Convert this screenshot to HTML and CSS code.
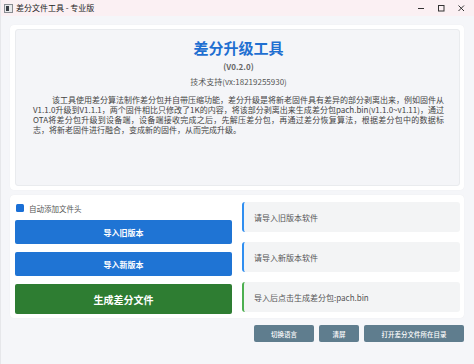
FILE: index.html
```html
<!DOCTYPE html>
<html lang="zh-CN">
<head>
<meta charset="utf-8">
<title>差分文件工具 - 专业版</title>
<link rel="stylesheet" href="styles.css">
</head>
<body>
<div class="window">
  <div class="titlebar">
    <div class="tb-left">
      <svg class="app-icon" width="9" height="9" viewBox="0 0 9 9"><rect x="0.5" y="0.5" width="8" height="8" fill="#e9eaec" stroke="#8a8d92"/><rect x="2" y="2" width="3" height="5" fill="#3b3f45"/></svg>
      <span class="tb-title">差分文件工具 - 专业版</span>
    </div>
    <div class="tb-controls">
      <svg width="10" height="10" viewBox="0 0 10 10"><line x1="2" y1="5.5" x2="8" y2="5.5" stroke="#333" stroke-width="1"/></svg>
      <svg width="10" height="10" viewBox="0 0 10 10"><rect x="2.5" y="2.5" width="5.5" height="5.5" fill="none" stroke="#333" stroke-width="1"/></svg>
      <svg width="10" height="10" viewBox="0 0 10 10"><path d="M2.5 2.5 L8 8 M8 2.5 L2.5 8" stroke="#333" stroke-width="1"/></svg>
    </div>
  </div>
  <div class="main">
    <section class="card intro-card">
      <div class="intro">
        <h1 class="app-title">差分升级工具</h1>
        <div class="version">(V0.2.0)</div>
        <div class="support">技术支持(vx:18219255930)</div>
        <p class="desc">该工具使用差分算法制作差分包并自带压缩功能，差分升级是将新老固件具有差异的部分剥离出来，例如固件从V1.1.0升级到V1.1.1，两个固件相比只修改了1K的内容，将该部分剥离出来生成差分包pach.bin(v1.1.0~v1.11)，通过OTA将差分包升级到设备端，设备端接收完成之后，先解压差分包，再通过差分恢复算法，根据差分包中的数据标志，将新老固件进行融合，变成新的固件，从而完成升级。</p>
      </div>
    </section>
    <section class="card work-card">
      <div class="col-left">
        <label class="check-row"><span class="checkbox"></span><span class="check-label">自动添加文件头</span></label>
        <button class="btn btn-blue">导入旧版本</button>
        <button class="btn btn-blue">导入新版本</button>
        <button class="btn btn-green">生成差分文件</button>
      </div>
      <div class="col-right">
        <div class="info info-blue">请导入旧版本软件</div>
        <div class="info info-blue">请导入新版本软件</div>
        <div class="info info-green">导入后点击生成差分包:pach.bin</div>
      </div>
    </section>
    <div class="actions">
      <button class="act act-lang">切换语言</button>
      <button class="act act-clear">清屏</button>
      <button class="act act-open">打开差分文件所在目录</button>
    </div>
  </div>
</div>
</body>
</html>
```
FILE: styles.css
```css
* { box-sizing: border-box; margin: 0; padding: 0; }
html, body { width: 474px; height: 364px; overflow: hidden; }
body {
  font-family: "Noto Sans CJK SC", "Open Sans", sans-serif;
  background: #f5f6f9;
  color: #333;
}
.window {
  width: 474px;
  height: 364px;
  display: flex;
  flex-direction: column;
  border-left: 1px solid #e6e7ea;
  background: #f5f6f9;
}
.titlebar {
  height: 16px;
  background: #fbf0f3;
  display: flex;
  align-items: center;
  justify-content: space-between;
  padding: 0 8px 0 3px;
}
.tb-left { display: flex; align-items: center; gap: 3px; }
.app-icon { display: block; }
.tb-title { font-size: 8px; color: #222; line-height: 16px; }
.tb-controls { display: flex; align-items: center; gap: 10px; }
.tb-controls svg { display: block; }
.main {
  flex: 1;
  display: flex;
  flex-direction: column;
  padding: 9px 10px 0 9px;
}
.card {
  background: #fff;
  border-radius: 4px;
  box-shadow: 0 0 1px rgba(0,0,0,0.08);
}
.intro-card { padding: 4px 4px 4px 5px; height: 165px; }
.intro {
  height: 100%;
  background: #f4f5f8;
  border: 1px solid #e9ebee;
  border-radius: 3px;
  padding: 8px 15px 0 17px;
  text-align: center;
}
.app-title {
  font-size: 15px;
  font-weight: 700;
  color: #1f6fd1;
  line-height: 20px;
}
.version {
  font-size: 8px;
  font-weight: 600;
  color: #666;
  line-height: 12px;
  margin-top: 3px;
}
.support {
  font-size: 8px;
  color: #555;
  line-height: 12px;
  margin-top: 3px;
}
.desc {
  margin-top: 7px;
  font-size: 8px;
  line-height: 10px;
  color: #444;
  text-align: justify;
  text-indent: 19px;
}
.work-card {
  margin-top: 5px;
  height: 123px;
  display: flex;
  gap: 10px;
  padding: 7px 4px 4px 5px;
}
.col-left { width: 217px; display: flex; flex-direction: column; }
.check-row { display: flex; align-items: center; gap: 5px; height: 12px; margin-left: 1px; }
.checkbox {
  width: 8px; height: 8px;
  background: #1a6fd6;
  border-radius: 1.5px;
  display: block;
}
.check-label { font-size: 7.5px; color: #555; }
.btn {
  border: none;
  border-radius: 2px;
  color: #fff;
  font-family: "Noto Sans CJK SC", sans-serif;
  font-weight: 700;
}
.btn-blue { height: 24px; background: #1f74d4; font-size: 8px; margin-top: 8px; }
.col-left .btn-blue:first-of-type { margin-top: 6px; }
.btn-green { height: 30px; background: #2e7d32; font-size: 10px; margin-top: 8px; }
.col-right { flex: 1; display: flex; flex-direction: column; gap: 10px; }
.info {
  height: 30px;
  background: #f3f4f5;
  border-radius: 3px;
  border-left: 2px solid #2f8ef0;
  font-size: 8px;
  color: #555;
  display: flex;
  align-items: center;
  padding-left: 10px;
}
.info-green { border-left-color: #4caf50; }
.actions {
  display: flex;
  justify-content: flex-end;
  gap: 5px;
  margin-top: 7px;
}
.act {
  height: 17px;
  border: none;
  border-radius: 2px;
  background: #5f7d8e;
  color: #fff;
  font-family: "Noto Sans CJK SC", sans-serif;
  font-size: 6.5px;
  font-weight: 500;
}
.act-lang { width: 60px; }
.act-clear { width: 40px; }
.act-open { width: 100px; }
```
